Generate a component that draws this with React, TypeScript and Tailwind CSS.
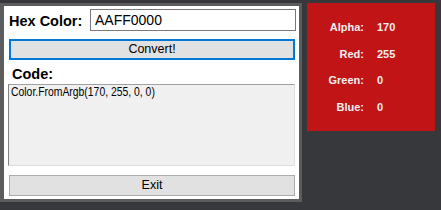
import React from "react";

export default function App() {
  const rows: [string, string][] = [
    ["Alpha:", "170"],
    ["Red:", "255"],
    ["Green:", "0"],
    ["Blue:", "0"],
  ];
  return (
    <div className="w-[441px] h-[210px] bg-[#37383c] flex items-start pt-[3px] gap-[5px] font-['Liberation_Sans',Arial,sans-serif] overflow-hidden">
      <div className="w-[302px] h-[199px] shrink-0 border-l-4 border-t-[3px] border-r-[3px] border-b-[3px] border-[#5c5c5c] bg-white flex flex-col pl-[4px] pr-[3px]">
        <div className="flex items-center mt-[3px] h-[22px]">
          <span className="ml-[1px] w-[81px] pt-[2px] font-bold text-[14.5px] leading-none text-black">Hex Color:</span>
          <div className="w-[206px] h-[22px] border border-[#7a7a7a] flex items-center pl-[4px] text-[14px] leading-none text-black">
            AAFF0000
          </div>
        </div>
        <button className="mt-[8px] ml-[1px] w-[286px] h-[21px] border-2 border-[#0078d7] bg-[#e1e1e1] flex items-center justify-center text-[12.5px] leading-none text-black">
          Convert!
        </button>
        <div className="ml-[4px] mt-[6px] h-[16px] flex items-center font-bold text-[14.5px] leading-none text-black">Code:</div>
        <div className="mt-[2px] w-[287px] h-[82px] border-l border-t border-l-[#828282] border-t-[#a0a0a0] border-r border-b border-r-[#dedede] border-b-[#dedede] bg-[#f0f0f0] pl-[2px]">
          <div className="w-max origin-left scale-x-[0.77] whitespace-nowrap text-[13.5px] leading-[14px] text-black">
            Color.FromArgb(170, 255, 0, 0)
          </div>
        </div>
        <button className="mt-[9px] ml-[1px] w-[286px] h-[21px] border border-[#adadad] bg-[#e1e1e1] flex items-center justify-center text-[12.5px] leading-none text-black">
          Exit
        </button>
      </div>
      <div className="w-[128px] h-[128px] shrink-0 bg-[#c01417] pt-[11px] flex flex-col">
        {rows.map(([l, v]) => (
          <div key={l} className="h-[26.7px] flex items-center text-[11px] font-bold text-[#f4eeee]">
            <span className="w-[57px] text-right">{l}</span>
            <span className="ml-[13px]">{v}</span>
          </div>
        ))}
      </div>
    </div>
  );
}
